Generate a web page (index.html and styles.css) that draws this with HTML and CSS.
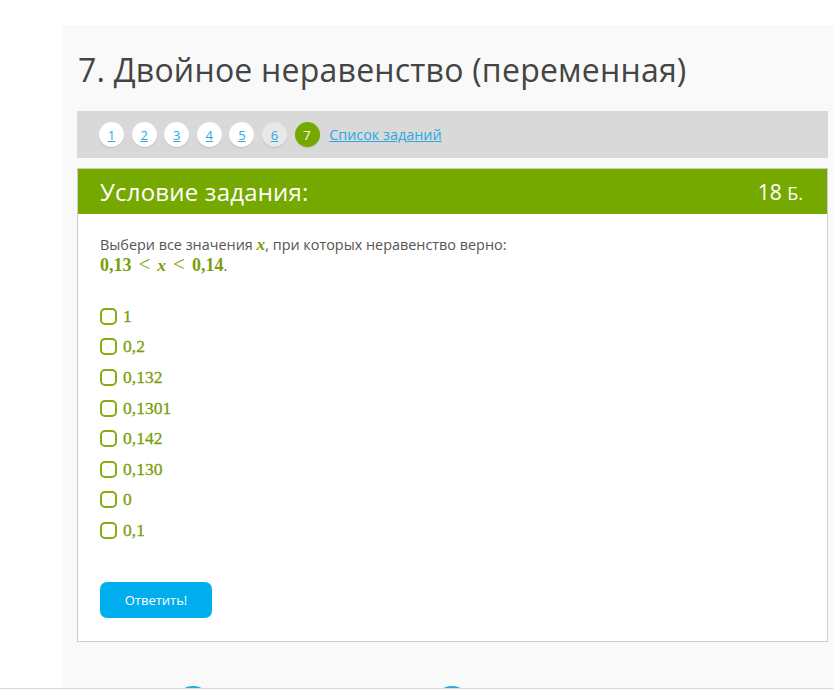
FILE: index.html
```html
<!DOCTYPE html>
<html lang="ru">
<head>
<meta charset="utf-8">
<title>Двойное неравенство</title>
<link rel="stylesheet" href="styles.css">
</head>
<body>
<div class="page">
  <div class="left-strip"></div>
  <main class="panel">
    <h1 class="title">7. Двойное неравенство (переменная)</h1>
    <nav class="pager">
      <a class="pg" href="#">1</a>
      <a class="pg" href="#">2</a>
      <a class="pg" href="#">3</a>
      <a class="pg" href="#">4</a>
      <a class="pg" href="#">5</a>
      <a class="pg pg-visited" href="#">6</a>
      <span class="pg pg-current">7</span>
      <a class="pager-list" href="#">Список заданий</a>
    </nav>
    <section class="card">
      <header class="card-head">
        <span class="card-title">Условие задания:</span>
        <span class="card-score">18 <span class="score-unit">Б.</span></span>
      </header>
      <div class="card-body">
        <p class="question">Выбери все значения <span class="mvar">x</span>, при которых неравенство верно:</p>
        <p class="ineq"><span class="mbold">0,13<span class="rel">&lt;</span><span class="mvar">x</span><span class="rel">&lt;</span>0,14</span><span class="dot">.</span></p>
        <ul class="options">
          <li class="opt"><span class="box"></span><span class="num">1</span></li>
          <li class="opt"><span class="box"></span><span class="num">0,2</span></li>
          <li class="opt"><span class="box"></span><span class="num">0,132</span></li>
          <li class="opt"><span class="box"></span><span class="num">0,1301</span></li>
          <li class="opt"><span class="box"></span><span class="num">0,142</span></li>
          <li class="opt"><span class="box"></span><span class="num">0,130</span></li>
          <li class="opt"><span class="box"></span><span class="num">0</span></li>
          <li class="opt"><span class="box"></span><span class="num">0,1</span></li>
        </ul>
        <button class="answer" type="button">Ответить!</button>
      </div>
    </section>
    <div class="bottom-icons">
      <span class="ring"></span>
      <span class="ring"></span>
    </div>
  </main>
</div>
<div class="bottom-line"></div>
</body>
</html>
```
FILE: styles.css
```css
html, body {
  margin: 0;
  padding: 0;
  background: #ffffff;
  overflow: hidden;
}
body {
  font-family: "Open Sans", "Liberation Sans", sans-serif;
  color: #444;
}
.page {
  display: flex;
  min-height: 690px;
}
.left-strip {
  width: 63px;
  flex: none;
}
.panel {
  flex: 1;
  margin-top: 25px;
  background: #f9f9f9;
  padding: 27px 5px 0 14px;
}
.title {
  margin: 0 0 24px 1px;
  font-size: 32px;
  line-height: 35px;
  font-weight: 400;
  color: #444;
  letter-spacing: 0.22px;
}
.pager {
  display: flex;
  align-items: center;
  height: 47px;
  box-sizing: border-box;
  padding: 0 0 0 22px;
  background: #d9d9d9;
  gap: 7.6px;
}
.pg {
  width: 25px;
  height: 25px;
  border-radius: 50%;
  background: #ffffff;
  box-shadow: 0 1px 1px rgba(0,0,0,0.12);
  display: flex;
  align-items: center;
  justify-content: center;
  font-size: 13px;
  color: #29a9e0;
  text-decoration: underline;
}
.pg-visited {
  background: #e8e8e8;
}
.pg-current {
  background: #76a900;
  color: #fff;
  text-decoration: none;
}
.pager-list {
  margin-left: 2px;
  font-size: 14.4px;
  color: #29a9e0;
  text-decoration: underline;
}
.card {
  margin-top: 10px;
  background: #fff;
  border: 1px solid #cccccc;
}
.card-head {
  height: 45px;
  background: #76a900;
  color: #fff;
  display: flex;
  align-items: center;
  justify-content: space-between;
  padding: 0 24px 0 22px;
}
.card-title {
  font-size: 24px;
  letter-spacing: 0.2px;
}
.card-score {
  font-size: 21px;
}
.score-unit {
  font-size: 18px;
}
.card-body {
  padding: 22px 22px 23px 22px;
}
.question {
  margin: 0;
  font-size: 14.4px;
  line-height: 18px;
  color: #555;
}
.question .mvar {
  line-height: 14px;
}
.ineq {
  margin: 0;
  height: 20px;
  line-height: 20px;
  font-size: 14.4px;
  color: #555;
}
.mvar {
  font-family: "Liberation Serif", "DejaVu Serif", serif;
  font-style: italic;
  font-weight: 700;
  font-size: 17.5px;
  color: #7a9e0a;
}
.mbold {
  font-family: "Liberation Serif", "DejaVu Serif", serif;
  font-weight: 700;
  font-size: 18px;
  color: #7a9e0a;
}
.rel {
  font-weight: 400;
  font-size: 21px;
  padding: 0 7px;
}
.dot {
  color: #555;
}
.options {
  list-style: none;
  margin: 27px 0 0 0;
  padding: 0;
}
.opt {
  height: 30.6px;
  display: flex;
  align-items: center;
}
.box {
  width: 17px;
  height: 17px;
  box-sizing: border-box;
  border: 2px solid #86ac14;
  border-radius: 5px;
  margin-right: 6px;
  flex: none;
}
.num {
  font-family: "Liberation Serif", "DejaVu Serif", serif;
  font-size: 17.5px;
  color: #7a9e0a;
  font-weight: 400;
  -webkit-text-stroke: 0.3px #7a9e0a;
}
.answer {
  margin-top: 36px;
  width: 112px;
  height: 36px;
  border: none;
  border-radius: 7px;
  background: #00aeef;
  color: #fff;
  font-family: "Open Sans", "Liberation Sans", sans-serif;
  font-size: 13px;
  display: block;
  padding: 0;
}
.bottom-icons {
  display: flex;
  padding-left: 98px;
  gap: 223px;
  margin-top: 44px;
}
.ring {
  width: 36px;
  height: 36px;
  border-radius: 50%;
  border: 2px solid #29a9e0;
  box-sizing: border-box;
}
.bottom-line {
  position: fixed;
  left: 0;
  right: 0;
  bottom: 0;
  height: 2px;
  border-top: 1px solid #cfd8de;
  background: #fff;
  box-sizing: border-box;
}
```
